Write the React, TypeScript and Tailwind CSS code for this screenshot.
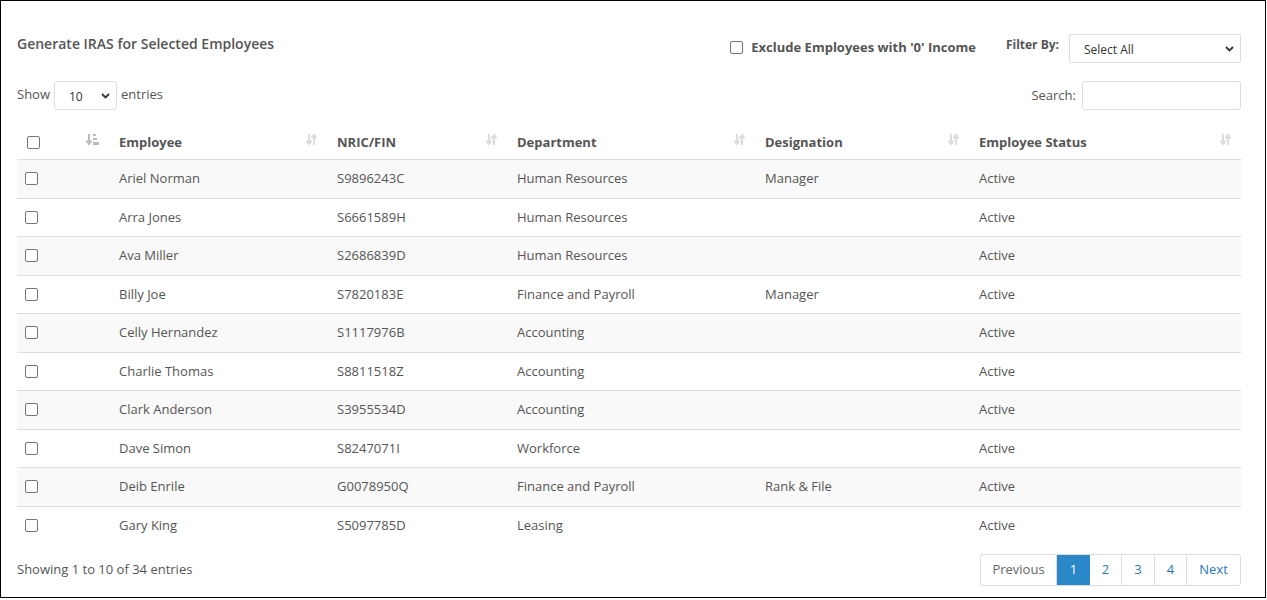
import React from "react";

const rows = [
  ["Ariel Norman", "S9896243C", "Human Resources", "Manager", "Active"],
  ["Arra Jones", "S6661589H", "Human Resources", "", "Active"],
  ["Ava Miller", "S2686839D", "Human Resources", "", "Active"],
  ["Billy Joe", "S7820183E", "Finance and Payroll", "Manager", "Active"],
  ["Celly Hernandez", "S1117976B", "Accounting", "", "Active"],
  ["Charlie Thomas", "S8811518Z", "Accounting", "", "Active"],
  ["Clark Anderson", "S3955534D", "Accounting", "", "Active"],
  ["Dave Simon", "S8247071I", "Workforce", "", "Active"],
  ["Deib Enrile", "G0078950Q", "Finance and Payroll", "Rank & File", "Active"],
  ["Gary King", "S5097785D", "Leasing", "", "Active"],
];

const Box = () => (
  <span className="block w-[13px] h-[13px] border border-[#767676] rounded-[2px] bg-white" />
);

const Chevron = () => (
  <svg width="9" height="6" viewBox="0 0 9 6" className="text-[#333]">
    <path d="M1 1l3.5 3.5L8 1" fill="none" stroke="currentColor" strokeWidth="1.8" />
  </svg>
);

const SortBoth = () => (
  <svg width="11" height="13" viewBox="0 0 11 13" className="text-[#dcdcdc]">
    <path d="M3 1v9M0.5 7.5L3 11l2.5-3.5" fill="none" stroke="currentColor" strokeWidth="2" />
    <path d="M8 12V3M5.5 5.5L8 2l2.5 3.5" fill="none" stroke="currentColor" strokeWidth="2" />
  </svg>
);

const SortAsc = () => (
  <svg width="13" height="13" viewBox="0 0 13 13" className="text-[#bdbdbd]">
    <path d="M3 1v9M0.5 7.5L3 11l2.5-3.5" fill="none" stroke="currentColor" strokeWidth="2" />
    <rect x="7" y="1" width="3" height="2" fill="currentColor" />
    <rect x="7" y="5" width="4" height="2" fill="currentColor" />
    <rect x="7" y="9" width="6" height="3" fill="currentColor" />
  </svg>
);

const cols = [
  { label: "", w: "w-[92px]" },
  { label: "Employee", w: "w-[218px]" },
  { label: "NRIC/FIN", w: "w-[180px]" },
  { label: "Department", w: "w-[248px]" },
  { label: "Designation", w: "w-[214px]" },
  { label: "Employee Status", w: "w-[272px]" },
];

export default function App() {
  return (
    <div className="w-[1266px] h-[598px] border border-black bg-white text-[#555] font-['Open_Sans',sans-serif] text-[13px] overflow-hidden">
      <div className="pl-[16px] pr-[24px] pt-[32px]">
        {/* top bar */}
        <div className="flex items-start">
          <h2 className="text-[14px] font-semibold text-[#555] mt-[1px] leading-[20px]">
            Generate IRAS for Selected Employees
          </h2>
          <div className="ml-auto flex items-start">
            <label className="flex items-center gap-[8px] mt-[5px]">
              <Box />
              <span className="font-bold text-[13px] text-[#555]">Exclude Employees with '0' Income</span>
            </label>
            <span className="ml-[30px] mt-[3px] font-bold text-[12px] text-[#555]">Filter By:</span>
            <div className="ml-[10px] mt-[1px] w-[172px] h-[29px] border border-[#ddd] rounded-[2px] flex items-center justify-between pl-[14px] pr-[6px] text-[12px] text-[#333]">
              <span className="mt-[2px]">Select All</span>
              <Chevron />
            </div>
          </div>
        </div>

        {/* show / search */}
        <div className="flex items-center mt-[18px] h-[29px]">
          <span className="mb-[2px]">Show</span>
          <div className="ml-[4px] w-[63px] h-[29px] border border-[#ddd] rounded-[3px] flex items-center justify-between pl-[14px] pr-[6px] text-[12px] text-[#333]">
            <span className="mt-[2px]">10</span>
            <Chevron />
          </div>
          <span className="ml-[4px] mb-[2px]">entries</span>
          <span className="ml-auto">Search:</span>
          <div className="ml-[6px] w-[159px] h-[29px] border border-[#ddd] rounded-[3px]" />
        </div>

        {/* table */}
        <div className="mt-[15px] w-[1224px]">
          <div className="flex h-[35px] border-b border-[#ddd] items-center font-bold">
            {cols.map((c, i) => (
              <div key={i} className={`${c.w} flex items-center h-full pl-[10px] pr-[10px] ${i === 0 ? "pl-[8px]" : ""}`}>
                {i === 0 ? <Box /> : <span className="mt-[2px]">{c.label}</span>}
                <span className="ml-auto -mt-[6px]">{i === 0 ? <SortAsc /> : <SortBoth />}</span>
              </div>
            ))}
          </div>
          {rows.map((r, ri) => (
            <div
              key={ri}
              className={`flex items-center h-[38.5px] border-b border-[#ddd] ${ri % 2 === 0 ? "bg-[#f9f9f9]" : "bg-white"} ${ri === rows.length - 1 ? "border-b-0" : ""}`}
            >
              <div className="w-[92px] pl-[8px]">
                <Box />
              </div>
              {r.map((cell, ci) => (
                <div key={ci} className={`${cols[ci + 1].w} pl-[10px] truncate`}>
                  {cell}
                </div>
              ))}
            </div>
          ))}
        </div>

        {/* footer */}
        <div className="flex items-center mt-[9px]">
          <span>Showing 1 to 10 of 34 entries</span>
          <div className="ml-auto flex border border-[#ddd] rounded-[3px] h-[32px] text-[13px] overflow-hidden">
            <span className="w-[76px] flex items-center justify-center text-[#666] border-r border-[#ddd]">Previous</span>
            <span className="w-[33px] flex items-center justify-center bg-[#2a88c8] text-white">1</span>
            <span className="w-[32px] flex items-center justify-center text-[#2a79b8] border-r border-[#ddd]">2</span>
            <span className="w-[33px] flex items-center justify-center text-[#2a79b8] border-r border-[#ddd]">3</span>
            <span className="w-[32px] flex items-center justify-center text-[#2a79b8] border-r border-[#ddd]">4</span>
            <span className="w-[53px] flex items-center justify-center text-[#2a79b8]">Next</span>
          </div>
        </div>
      </div>
    </div>
  );
}
